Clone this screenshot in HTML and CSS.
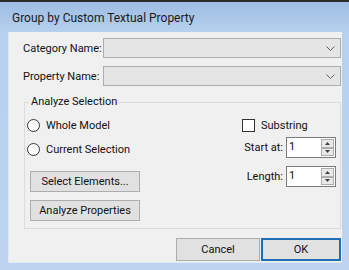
FILE: index.html
```html
<!DOCTYPE html>
<html lang="en">
<head>
  <meta charset="UTF-8" />
  <title>Group by Custom Textual Property</title>
  <link rel="stylesheet" href="styles.css">
</head>
<body>
  <div class="window">
    <div class="titlebar">Group by Custom Textual Property</div>
    <div class="client">
      <div class="field-row">
        <label class="field-label">Category Name:</label>
        <div class="combo">
          <svg class="chevron" width="9" height="5" viewBox="0 0 9 5"><path d="M0.5 0.5 L4.5 4.5 L8.5 0.5" fill="none" stroke="#606060" stroke-width="1"/></svg>
        </div>
      </div>
      <div class="field-row">
        <label class="field-label">Property Name:</label>
        <div class="combo">
          <svg class="chevron" width="9" height="5" viewBox="0 0 9 5"><path d="M0.5 0.5 L4.5 4.5 L8.5 0.5" fill="none" stroke="#606060" stroke-width="1"/></svg>
        </div>
      </div>

      <fieldset class="group">
        <legend>Analyze Selection</legend>
        <div class="group-body">
          <div class="col-left">
            <label class="radio"><span class="radio-circle"></span>Whole Model</label>
            <label class="radio"><span class="radio-circle"></span>Current Selection</label>
            <button class="btn btn-wide first">Select Elements...</button>
            <button class="btn btn-wide">Analyze Properties</button>
          </div>
          <div class="col-right">
            <label class="check"><span class="check-box"></span>Substring</label>
            <div class="spin-row">
              <span class="spin-label">Start at:</span>
              <div class="spin">
                <span class="spin-value">1</span>
                <div class="spin-btns">
                  <span class="spin-btn"><svg width="5" height="3" viewBox="0 0 5 3"><path d="M0 3 L2.5 0 L5 3 Z" fill="#404040"/></svg></span>
                  <span class="spin-btn"><svg width="5" height="3" viewBox="0 0 5 3"><path d="M0 0 L2.5 3 L5 0 Z" fill="#404040"/></svg></span>
                </div>
              </div>
            </div>
            <div class="spin-row">
              <span class="spin-label">Length:</span>
              <div class="spin">
                <span class="spin-value">1</span>
                <div class="spin-btns">
                  <span class="spin-btn"><svg width="5" height="3" viewBox="0 0 5 3"><path d="M0 3 L2.5 0 L5 3 Z" fill="#404040"/></svg></span>
                  <span class="spin-btn"><svg width="5" height="3" viewBox="0 0 5 3"><path d="M0 0 L2.5 3 L5 0 Z" fill="#404040"/></svg></span>
                </div>
              </div>
            </div>
          </div>
        </div>
      </fieldset>

      <div class="actions">
        <button class="btn btn-cancel">Cancel</button>
        <button class="btn btn-ok">OK</button>
      </div>
    </div>
  </div>
</body>
</html>
```

FILE: styles.css
```css
* { box-sizing: border-box; margin: 0; padding: 0; }
body {
  background: #bcd4ef;
  font-family: Roboto, "Noto Sans", sans-serif;
  font-size: 11px;
  color: #111;
  width: 349px;
  height: 270px;
  overflow: hidden;
}
.window {
  height: 270px;
  border-top: 2px solid #2a2a2a;
  background: linear-gradient(#9dbde3, #b6d0ee 30px, #bcd4ef);
  display: flex;
  flex-direction: column;
}
.titlebar {
  height: 30px;
  padding: 9px 0 0 12px;
  font-size: 12px;
  color: #1a1a1a;
}
.client {
  margin: 0 7px 0 8px;
  height: 231px;
  background: #f0f0f0;
  border-left: 1px solid #dfe9f5;
  border-bottom: 1px solid #dfe9f5;
  padding-top: 6px;
  display: flex;
  flex-direction: column;
}
.field-row {
  display: flex;
  align-items: center;
  height: 20px;
  margin-bottom: 8px;
}
.field-label {
  flex-shrink: 0;
  white-space: nowrap;
  width: 94px;
  padding-left: 14px;
}
.combo {
  width: 238px;
  height: 20px;
  background: #e5e5e5;
  border: 1px solid #adadad;
  display: flex;
  align-items: center;
  justify-content: flex-end;
  padding-right: 5px;
}
.group {
  margin: 1px 0 0 15px;
  width: 317px;
  height: 134px;
  border: 1px solid #dcdcdc;
  padding: 0;
}
.group legend {
  margin-left: 4px;
  padding: 0 2px;
  line-height: 14px;
}
.group-body {
  display: flex;
  justify-content: space-between;
}
.col-left {
  display: flex;
  flex-direction: column;
  padding: 8px 0 0 2px;
}
.radio {
  display: flex;
  align-items: center;
  height: 16px;
  margin-bottom: 8px;
  gap: 6px;
}
.radio-circle {
  width: 13px;
  height: 13px;
  border: 1px solid #333;
  border-radius: 50%;
  background: #fff;
}
.btn {
  font-family: inherit;
  font-size: 11px;
  color: #111;
  background: #e1e1e1;
  border: 1px solid #adadad;
}
.btn-wide {
  width: 110px;
  height: 21px;
  margin-left: 3px;
  margin-bottom: 8px;
}
.btn-wide.first { margin-top: 6px; }
.col-right {
  display: flex;
  flex-direction: column;
  align-items: flex-end;
  padding: 8px 4px 0 0;
  width: 100px;
}
.check {
  display: flex;
  align-items: center;
  gap: 6px;
  height: 16px;
  width: 94px;
}
.spin-row {
  display: flex;
  align-items: center;
  gap: 3px;
  margin-top: 4px;
}
.spin-row + .spin-row { margin-top: 8px; }
.check-box {
  width: 13px;
  height: 13px;
  border: 1px solid #333;
  background: #fff;
}
.spin {
  width: 50px;
  height: 21px;
  background: #fff;
  border: 1px solid #7a7a7a;
  display: flex;
  justify-content: space-between;
}
.spin-value { padding: 2px 0 0 2px; }
.spin-btns {
  display: flex;
  flex-direction: column;
  width: 15px;
  padding: 1px;
}
.spin-btn {
  flex: 1;
  display: flex;
  align-items: center;
  justify-content: center;
  background: #e8e8e8;
  border: 1px solid #adadad;
}
.actions {
  display: flex;
  justify-content: flex-end;
  gap: 1px;
  margin-top: 9px;
  padding-right: 1px;
}
.btn-cancel {
  width: 84px;
  height: 23px;
}
.btn-ok {
  width: 80px;
  height: 23px;
  border: 2px solid #1f6fb6;
}
```
